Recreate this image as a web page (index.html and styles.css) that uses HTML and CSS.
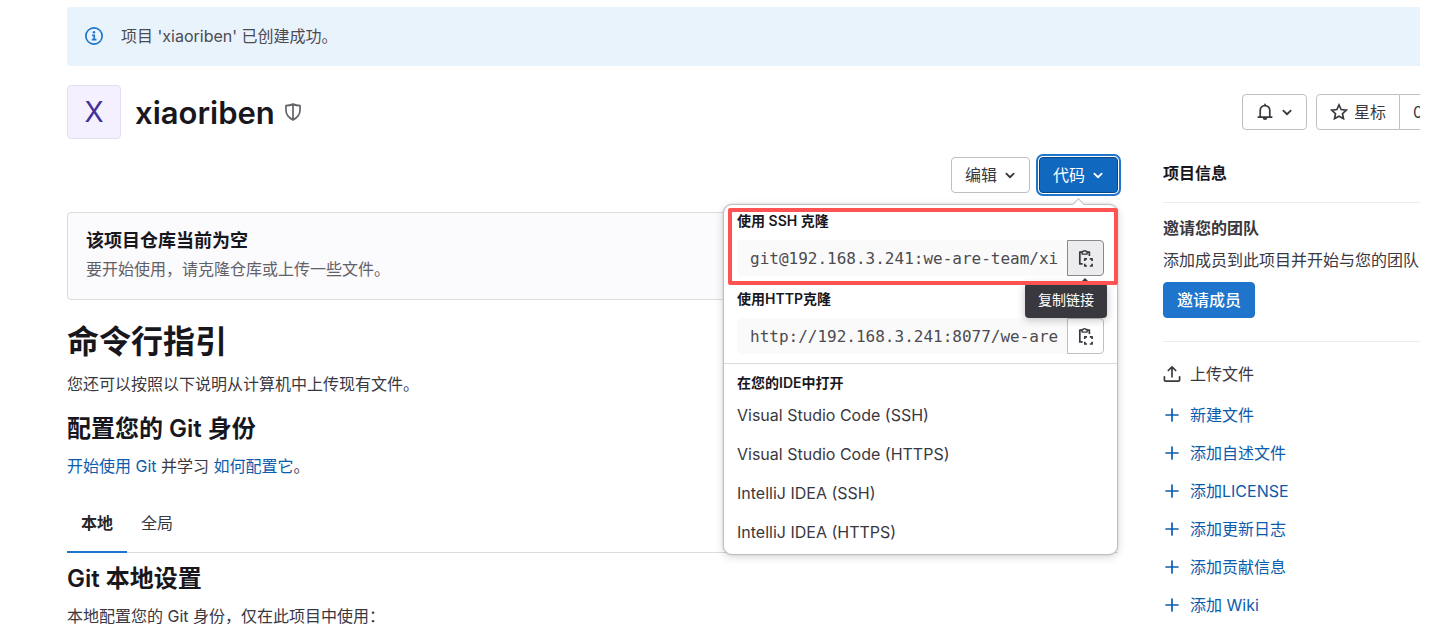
FILE: index.html
```html
<!DOCTYPE html>
<html lang="zh-CN">
<head>
<meta charset="utf-8">
<meta name="viewport" content="width=device-width, initial-scale=1">
<title>xiaoriben</title>
<link rel="stylesheet" href="styles.css">
</head>
<body>
<svg class="sprite" aria-hidden="true">
  <symbol id="chevron" viewBox="0 0 16 16"><path d="M4.750 6.750 8 10l3.250-3.250" fill="none" stroke="currentColor" stroke-width="1.600" stroke-linecap="round" stroke-linejoin="round"/></symbol>
  <symbol id="plus" viewBox="0 0 16 16"><path d="M8 2.750v10.500M2.750 8h10.500" fill="none" stroke="currentColor" stroke-width="1.500" stroke-linecap="round"/></symbol>
  <symbol id="copy" viewBox="0 0 16 16"><path d="M4.500 2.750H2.500v10.500H5M9 2.750h2v3.500" fill="none" stroke="currentColor" stroke-width="1.500" stroke-linejoin="round"/><path d="M4.500 4.500v-2.300h1.100a1.250 1.250 0 0 1 2.300 0H9v2.300z" fill="none" stroke="currentColor" stroke-width="1.200" stroke-linejoin="round"/><path d="M6.900 10.700V8.750h2M11.400 8.750h2v1.950M13.400 13.100v2h-2M8.900 15.100h-2v-2" fill="none" stroke="currentColor" stroke-width="1.500" stroke-linejoin="round"/></symbol>
</svg>

<div class="page">
  <div class="alert" role="status">
    <svg class="icon" viewBox="0 0 16 16" aria-hidden="true"><circle cx="8" cy="8" r="7.250" fill="none" stroke="currentColor" stroke-width="1.500"/><path d="M6.300 7.500H8.200v3.700M6 11.250h4.200" fill="none" stroke="currentColor" stroke-width="1.500"/><circle cx="8" cy="4.700" r="1.100" fill="currentColor"/></svg>
    <span>项目 'xiaoriben' 已创建成功。</span>
  </div>

  <header class="project-header">
    <div class="avatar" aria-hidden="true">X</div>
    <h1 class="project-name">xiaoriben</h1>
    <svg class="icon shield" viewBox="0 0 16 16" aria-hidden="true"><path d="M8 1c2 .9 4.100 1.300 6.250 1.400v4.100c0 4-2.400 6.600-6.250 8.500C4.150 13.100 1.750 10.500 1.750 6.500V2.400C3.900 2.300 6 1.900 8 1zM8 1v14" fill="none" stroke="currentColor" stroke-width="1.500" stroke-linejoin="round"/></svg>
    <div class="header-actions">
      <button class="btn" type="button" aria-label="通知">
        <svg class="icon" viewBox="0 0 16 16" aria-hidden="true"><path d="M3.750 12V6.500a4.250 4.250 0 0 1 8.500 0V12M2 12.500h12M8 1.200v1" fill="none" stroke="currentColor" stroke-width="1.500" stroke-linecap="round"/><path d="M6 13h4a2 2 0 0 1-4 0z" fill="currentColor"/></svg>
        <svg class="icon chevron"><use href="#chevron"/></svg>
      </button>
      <div class="btn-group">
        <button class="btn star" type="button">
          <svg class="icon" viewBox="0 0 16 16" aria-hidden="true"><path d="m8 1.700 1.900 4.100 4.500.600-3.300 3.100.9 4.500L8 11.800 4 14l.9-4.500L1.600 6.400l4.500-.6z" fill="none" stroke="currentColor" stroke-width="1.500" stroke-linejoin="miter"/></svg>
          <span>星标</span>
        </button>
        <a class="btn count" href="#">0</a>
      </div>
    </div>
  </header>

  <div class="columns">
    <main class="main">
      <div class="toolbar">
        <button class="btn" type="button">编辑 <svg class="icon chevron"><use href="#chevron"/></svg></button>
        <div class="dropdown">
          <button class="btn primary focused" type="button" aria-expanded="true">代码 <svg class="icon chevron"><use href="#chevron"/></svg></button>
          <div class="menu">
            <div class="clone">
              <label class="menu-label" for="ssh">使用 SSH 克隆</label>
              <div class="copy-row">
                <input class="copy-input" id="ssh" type="text" readonly value="git@192.168.3.241:we-are-team/xi">
                <button class="copy-btn hovered" type="button" aria-label="复制链接"><svg class="icon"><use href="#copy"/></svg></button>
                <div class="tooltip" role="tooltip">复制链接</div>
              </div>
            </div>
            <div class="clone">
              <label class="menu-label" for="http">使用HTTP克隆</label>
              <div class="copy-row">
                <input class="copy-input" id="http" type="text" readonly value="http://192.168.3.241:8077/we-are">
                <button class="copy-btn" type="button" aria-label="复制链接"><svg class="icon"><use href="#copy"/></svg></button>
              </div>
            </div>
            <div class="ide">
              <div class="menu-label">在您的IDE中打开</div>
              <a class="menu-item" href="#">Visual Studio Code (SSH)</a>
              <a class="menu-item" href="#">Visual Studio Code (HTTPS)</a>
              <a class="menu-item" href="#">IntelliJ IDEA (SSH)</a>
              <a class="menu-item" href="#">IntelliJ IDEA (HTTPS)</a>
            </div>
            <div class="highlight"></div>
          </div>
        </div>
      </div>

      <section class="empty">
        <h2 class="empty-title">该项目仓库当前为空</h2>
        <p class="text muted">要开始使用，请克隆仓库或上传一些文件。</p>
      </section>

      <h2 class="title-large">命令行指引</h2>
      <p class="text">您还可以按照以下说明从计算机中上传现有文件。</p>
      <h3 class="title">配置您的 Git 身份</h3>
      <p class="text"><a class="link" href="#">开始使用 Git</a> 并学习 <a class="link" href="#">如何配置它</a>。</p>

      <div class="tabs" role="tablist">
        <button class="tab active" type="button" role="tab" aria-selected="true">本地</button>
        <button class="tab" type="button" role="tab" aria-selected="false">全局</button>
      </div>
      <h3 class="title tab-title">Git 本地设置</h3>
      <p class="text">本地配置您的 Git 身份，仅在此项目中使用：</p>
    </main>

    <aside class="sidebar">
      <h2 class="side-title">项目信息</h2>
      <section class="invite">
        <h3 class="side-subtitle">邀请您的团队</h3>
        <p class="text nowrap">添加成员到此项目并开始与您的团队合作！</p>
        <button class="btn primary invite-btn" type="button">邀请成员</button>
      </section>
      <nav class="side-links">
        <a class="side-link upload" href="#"><svg class="icon" viewBox="0 0 16 16" aria-hidden="true"><path d="M8 10.500V1.800M4.700 4.900 8 1.600l3.300 3.300M1.250 10.500v2.750a1 1 0 0 0 1 1h11.500a1 1 0 0 0 1-1V10.500" fill="none" stroke="currentColor" stroke-width="1.500" stroke-linecap="round" stroke-linejoin="round"/></svg>上传文件</a>
        <a class="side-link" href="#"><svg class="icon"><use href="#plus"/></svg>新建文件</a>
        <a class="side-link" href="#"><svg class="icon"><use href="#plus"/></svg>添加自述文件</a>
        <a class="side-link" href="#"><svg class="icon"><use href="#plus"/></svg>添加LICENSE</a>
        <a class="side-link" href="#"><svg class="icon"><use href="#plus"/></svg>添加更新日志</a>
        <a class="side-link" href="#"><svg class="icon"><use href="#plus"/></svg>添加贡献信息</a>
        <a class="side-link" href="#"><svg class="icon"><use href="#plus"/></svg>添加 Wiki</a>
      </nav>
    </aside>
  </div>
</div>
</body>
</html>
```
FILE: styles.css
```css
* { box-sizing: border-box; }

body {
  margin: 0;
  background: #fff;
  color: #3a383f;
  font-family: Inter, "Noto Sans CJK SC", sans-serif;
  font-size: 16px;
  line-height: 24px;
}

h1, h2, h3, p { margin: 0; }

button, input { font: inherit; color: inherit; }

.sprite { position: absolute; width: 0; height: 0; }

.page {
  margin-right: 9px;
  padding: 7px 0 0 67px;
  overflow: hidden;
}

.icon { width: 18px; height: 18px; flex: none; }
.icon.chevron { margin: 0 -3px 0 -2px; }

.alert {
  display: flex;
  align-items: center;
  gap: 18px;
  padding: 17px 18px 18px;
  border-radius: 4px 0 0 4px;
  background: #e9f3fc;
  color: #4c4b51;
}
.alert .icon { color: #1f75cb; }

.project-header {
  display: flex;
  align-items: center;
  margin: 19px -17px 18px 0;
}

.avatar {
  display: flex;
  align-items: center;
  justify-content: center;
  width: 54px;
  height: 54px;
  border: 1px solid #e4def0;
  border-radius: 4px;
  background: #f4f0ff;
  color: #41309b;
  font-size: 28px;
}

.project-name {
  margin-left: 14px;
  padding-top: 2px;
  color: #18171d;
  font-size: 31px;
  font-weight: 600;
  line-height: 40px;
}

.shield { margin-left: 9px; color: #626168; }

.header-actions { display: flex; gap: 9px; margin-left: auto; }

.btn {
  display: inline-flex;
  align-items: center;
  justify-content: center;
  gap: 6px;
  height: 36px;
  padding: 0 13px;
  border: 1px solid #bfbfc3;
  border-radius: 4px;
  background: #fff;
  color: #3a383f;
  text-decoration: none;
  white-space: nowrap;
}

.btn-group { display: flex; }
.star { border-radius: 4px 0 0 4px; }
.count { border-left: 0; border-radius: 0 4px 4px 0; }

.primary { border-color: #1f75cb; background: #1f75cb; color: #fff; }
.focused {
  border-color: #064787;
  background: #1068bf;
  box-shadow: 0 0 0 1px #fff, 0 0 0 3px #1f75cb;
}

.columns {
  display: grid;
  grid-template-columns: minmax(0, 1fr) 257px;
  column-gap: 45px;
}

.toolbar { display: flex; justify-content: flex-end; gap: 9px; }
.dropdown { position: relative; }

.menu {
  position: absolute;
  z-index: 2;
  top: 47px;
  right: 0;
  width: 395px;
  padding-top: 6px;
  border: 1px solid #bfbfc3;
  border-radius: 9px;
  background: #fff;
  box-shadow: 0 0 2px rgba(5, 5, 6, .16), 0 2px 8px rgba(5, 5, 6, .16);
}
.menu::before {
  content: "";
  position: absolute;
  top: -5px;
  right: 34px;
  width: 8px;
  height: 8px;
  border: 1px solid #bfbfc3;
  border-width: 1px 0 0 1px;
  background: #fff;
  transform: rotate(45deg);
}

.clone { padding: 0 13px 9px; }
.clone + .clone { padding-top: 4px; }
.menu-label {
  display: block;
  color: #18171d;
  font-size: 14px;
  font-weight: 600;
  line-height: 20px;
}
.clone .menu-label { margin-bottom: 9px; }

.copy-row { position: relative; display: flex; }
.copy-input {
  flex: 1;
  min-width: 0;
  height: 36px;
  padding: 0 0 0 13px;
  border: 0;
  border-radius: 4px 0 0 4px;
  outline: 0;
  background: #fafafa;
  color: #4c4b51;
  font-family: "DejaVu Sans Mono", monospace;
}
.copy-btn {
  display: flex;
  align-items: center;
  justify-content: center;
  width: 37px;
  height: 36px;
  padding: 0;
  border: 1px solid #bfbfc3;
  border-radius: 0 4px 4px 0;
  background: #fff;
}
.copy-btn.hovered { border-color: #89888d; background: #ececef; }

.tooltip {
  position: absolute;
  z-index: 1;
  top: 43px;
  right: -3px;
  padding: 7px 13px 8px;
  border-radius: 4px;
  background: #3a383f;
  color: #fff;
  font-size: 14px;
  line-height: 20px;
  box-shadow: 0 2px 8px rgba(5, 5, 6, .24);
}
.tooltip::before {
  content: "";
  position: absolute;
  top: -5px;
  right: 17px;
  border: 5px solid transparent;
  border-top: 0;
  border-bottom-color: #3a383f;
}

.highlight {
  position: absolute;
  z-index: 2;
  top: 3px;
  left: 4px;
  right: -1px;
  height: 77px;
  border: 4px solid #ff5353;
  border-radius: 2px;
  pointer-events: none;
}

.ide { padding: 9px 0 3px; border-top: 1px solid #dcdcde; }
.ide .menu-label { padding: 0 13px 3px; }
.menu-item {
  display: block;
  padding: 7px 13px;
  color: #3a383f;
  text-decoration: none;
}
.menu-item + .menu-item { padding-top: 8px; }

.empty {
  margin-top: 19px;
  padding: 16px 18px 18px;
  border: 1px solid #dcdcde;
  border-radius: 4px;
  background: #fbfafd;
}
.empty-title {
  margin-bottom: 4px;
  color: #18171d;
  font-size: 18px;
  font-weight: 600;
  line-height: 24px;
}
.muted { color: #626168; }

.title-large {
  margin: 20px 0 8px;
  color: #18171d;
  font-size: 32px;
  font-weight: 600;
  line-height: 44px;
}
.title {
  margin: 17px 0 9px;
  color: #18171d;
  font-size: 24px;
  font-weight: 600;
  line-height: 32px;
}
.tab-title { margin-top: 10px; }

.link { color: #0b5cad; text-decoration: none; }

.tabs { display: flex; margin-top: 16px; border-bottom: 1px solid #dcdcde; }
.tab {
  margin-bottom: -1px;
  padding: 17px 14px 16px;
  border: 0;
  border-bottom: 2px solid transparent;
  background: none;
}
.tab.active { border-color: #1f75cb; color: #28272d; font-weight: 600; }

.side-title {
  padding: 4px 0 17px;
  border-bottom: 1px solid #ececef;
  color: #18171d;
  font-size: 16px;
  font-weight: 600;
  line-height: 24px;
}
.side-subtitle {
  margin-bottom: 8px;
  font-size: 16px;
  font-weight: 600;
  line-height: 24px;
}
.nowrap { white-space: nowrap; }
.invite { padding: 13px 0 23px; border-bottom: 1px solid #ececef; }
.invite-btn { margin-top: 10px; font-weight: 500; }

.side-links {
  display: flex;
  flex-direction: column;
  gap: 14px;
  padding-top: 20px;
}
.side-link {
  display: flex;
  align-items: center;
  gap: 9px;
  color: #0b5cad;
  text-decoration: none;
}
.side-link.upload { margin-bottom: 3px; color: #3a383f; }
```
